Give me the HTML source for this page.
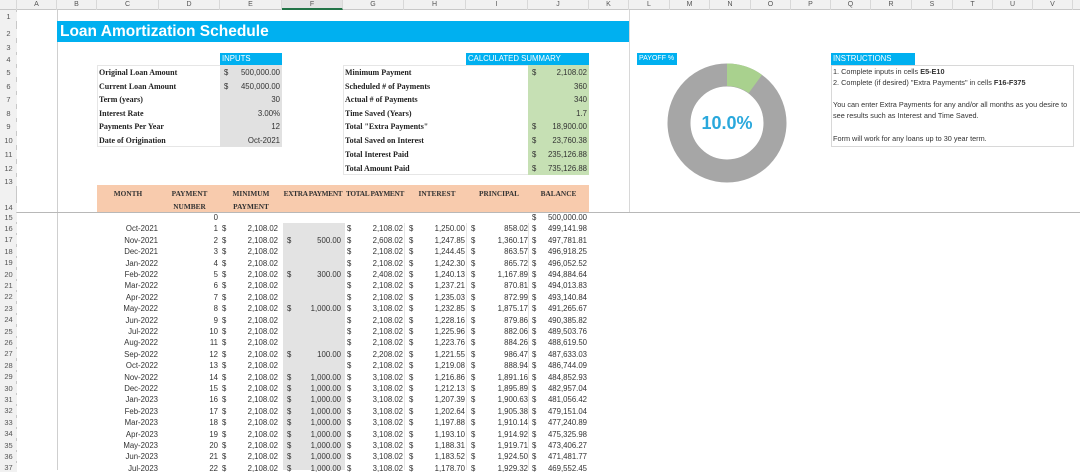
<!DOCTYPE html>
<html><head><meta charset="utf-8"><style>
*{margin:0;padding:0;box-sizing:border-box}
body{width:1080px;height:470px;overflow:hidden;background:#fff;position:relative;font-family:"Liberation Sans",sans-serif;color:#333}
.a{position:absolute;white-space:nowrap}
.ch{position:absolute;top:0;height:10px;font-size:7px;line-height:10px;color:#555;text-align:center;border-right:1px solid #d8d8d8}
.rh{position:absolute;left:0;width:17px;font-size:7.5px;color:#555;text-align:center;background:#f1f1f1}
.lb{position:absolute;font-family:"Liberation Serif",serif;font-weight:bold;font-size:8px;color:#222;white-space:nowrap}
.nv{position:absolute;font-size:7.8px;white-space:nowrap;text-align:right}
.r{position:absolute;left:0;width:600px;height:11px;font-size:7.8px;line-height:11px}
.r span{position:absolute;white-space:nowrap}
.m{left:97px;width:61px;text-align:right}
.n{left:160px;width:58px;text-align:right}
.d1{left:222px}.v1{left:230px;width:48px;text-align:right}
.d2{left:287px}.v2{left:295px;width:46px;text-align:right}
.d3{left:347px}.v3{left:355px;width:48px;text-align:right}
.d4{left:409px}.v4{left:415px;width:50px;text-align:right}
.d5{left:471px}.v5{left:478px;width:50px;text-align:right}
.d6{left:532px}.v6{left:540px;width:47px;text-align:right}
.hd{position:absolute;font-family:"Liberation Serif",serif;font-weight:bold;font-size:7.3px;color:#333;text-align:center;white-space:nowrap}
.blue{position:absolute;background:#00b0f0;color:#fff;font-size:7.8px;line-height:12px;padding-left:2px}
.ins{position:absolute;left:833px;font-size:7.3px;color:#333;white-space:nowrap}
</style></head><body>
<div class="a" style="left:0;top:0;width:1080px;height:10px;background:#f1f1f1;border-bottom:1px solid #c8c8c8"></div>
<div class="ch" style="left:0;width:17px"></div>
<div class="ch" style="left:17px;width:40px">A</div>
<div class="ch" style="left:57px;width:40px">B</div>
<div class="ch" style="left:97px;width:62px">C</div>
<div class="ch" style="left:159px;width:61px">D</div>
<div class="ch" style="left:220px;width:62px">E</div>
<div class="ch" style="left:282px;width:61px;background:#e3e3e3;border-bottom:2px solid #217346">F</div>
<div class="ch" style="left:343px;width:61px">G</div>
<div class="ch" style="left:404px;width:62px">H</div>
<div class="ch" style="left:466px;width:62px">I</div>
<div class="ch" style="left:528px;width:61px">J</div>
<div class="ch" style="left:589px;width:40px">K</div>
<div class="ch" style="left:629px;width:41px">L</div>
<div class="ch" style="left:670px;width:40px">M</div>
<div class="ch" style="left:710px;width:41px">N</div>
<div class="ch" style="left:751px;width:40px">O</div>
<div class="ch" style="left:791px;width:40px">P</div>
<div class="ch" style="left:831px;width:40px">Q</div>
<div class="ch" style="left:871px;width:41px">R</div>
<div class="ch" style="left:912px;width:41px">S</div>
<div class="ch" style="left:953px;width:40px">T</div>
<div class="ch" style="left:993px;width:40px">U</div>
<div class="ch" style="left:1033px;width:40px">V</div>
<div class="a" style="left:0;top:10px;width:17px;height:460px;background:#f1f1f1;border-right:1px solid #c8c8c8"></div>
<div class="rh" style="top:12px">1</div>
<div class="rh" style="top:29px">2</div>
<div class="rh" style="top:43px">3</div>
<div class="rh" style="top:55px">4</div>
<div class="rh" style="top:68px">5</div>
<div class="rh" style="top:82px">6</div>
<div class="rh" style="top:95px">7</div>
<div class="rh" style="top:109px">8</div>
<div class="rh" style="top:122px">9</div>
<div class="rh" style="top:136px">10</div>
<div class="rh" style="top:150px">11</div>
<div class="rh" style="top:164px">12</div>
<div class="rh" style="top:177px">13</div>
<div class="rh" style="top:203px">14</div>
<div class="rh" style="top:213px">15</div>
<div class="rh" style="top:224px">16</div>
<div class="rh" style="top:235px">17</div>
<div class="rh" style="top:247px">18</div>
<div class="rh" style="top:258px">19</div>
<div class="rh" style="top:270px">20</div>
<div class="rh" style="top:281px">21</div>
<div class="rh" style="top:292px">22</div>
<div class="rh" style="top:304px">23</div>
<div class="rh" style="top:315px">24</div>
<div class="rh" style="top:327px">25</div>
<div class="rh" style="top:338px">26</div>
<div class="rh" style="top:349px">27</div>
<div class="rh" style="top:361px">28</div>
<div class="rh" style="top:372px">29</div>
<div class="rh" style="top:384px">30</div>
<div class="rh" style="top:395px">31</div>
<div class="rh" style="top:406px">32</div>
<div class="rh" style="top:418px">33</div>
<div class="rh" style="top:429px">34</div>
<div class="rh" style="top:441px">35</div>
<div class="rh" style="top:452px">36</div>
<div class="rh" style="top:463px">37</div>

<div class="a" style="left:57px;top:10px;width:1px;height:460px;background:#cfcfcf"></div>
<div class="a" style="left:629px;top:10px;width:1px;height:203px;background:#d8d8d8"></div>
<div class="a" style="left:17px;top:212px;width:1063px;height:1px;background:#b8b8b8"></div>

<div class="a" style="left:57px;top:21px;width:572px;height:21px;background:#00b0f0;color:#fff;font-weight:bold;font-size:15.5px;line-height:21px;padding-left:3px">Loan Amortization Schedule</div>

<div class="blue" style="left:220px;top:53px;width:62px">INPUTS</div>
<div class="a" style="left:97px;top:65px;width:185px;height:82px;border:1px solid #e6e6e6"></div>
<div class="a" style="left:220px;top:65px;width:62px;height:82px;background:#e1e1e1"></div>
<div class="lb" style="left:99px;top:68px">Original Loan Amount</div>
<div class="lb" style="left:99px;top:82px">Current Loan Amount</div>
<div class="lb" style="left:99px;top:95px">Term (years)</div>
<div class="lb" style="left:99px;top:109px">Interest Rate</div>
<div class="lb" style="left:99px;top:122px">Payments Per Year</div>
<div class="lb" style="left:99px;top:136px">Date of Origination</div>
<div class="nv" style="left:224px;top:68px">$</div>
<div class="nv" style="left:224px;top:82px">$</div>
<div class="nv" style="left:220px;width:60px;top:68px">500,000.00</div>
<div class="nv" style="left:220px;width:60px;top:82px">450,000.00</div>
<div class="nv" style="left:220px;width:60px;top:95px">30</div>
<div class="nv" style="left:220px;width:60px;top:109px">3.00%</div>
<div class="nv" style="left:220px;width:60px;top:122px">12</div>
<div class="nv" style="left:220px;width:60px;top:136px">Oct-2021</div>

<div class="blue" style="left:466px;top:53px;width:123px">CALCULATED SUMMARY</div>
<div class="a" style="left:343px;top:65px;width:246px;height:110px;border:1px solid #e6e6e6"></div>
<div class="a" style="left:528px;top:65px;width:61px;height:110px;background:#c6e0b4"></div>
<div class="lb" style="left:345px;top:68px">Minimum Payment</div>
<div class="lb" style="left:345px;top:82px">Scheduled # of Payments</div>
<div class="lb" style="left:345px;top:95px">Actual # of Payments</div>
<div class="lb" style="left:345px;top:109px">Time Saved (Years)</div>
<div class="lb" style="left:345px;top:122px">Total "Extra Payments"</div>
<div class="lb" style="left:345px;top:136px">Total Saved on Interest</div>
<div class="lb" style="left:345px;top:150px">Total Interest Paid</div>
<div class="lb" style="left:345px;top:164px">Total Amount Paid</div>
<div class="nv" style="left:532px;top:68px">$</div>
<div class="nv" style="left:532px;top:122px">$</div>
<div class="nv" style="left:532px;top:136px">$</div>
<div class="nv" style="left:532px;top:150px">$</div>
<div class="nv" style="left:532px;top:164px">$</div>
<div class="nv" style="left:528px;width:59px;top:68px">2,108.02</div>
<div class="nv" style="left:528px;width:59px;top:82px">360</div>
<div class="nv" style="left:528px;width:59px;top:95px">340</div>
<div class="nv" style="left:528px;width:59px;top:109px">1.7</div>
<div class="nv" style="left:528px;width:59px;top:122px">18,900.00</div>
<div class="nv" style="left:528px;width:59px;top:136px">23,760.38</div>
<div class="nv" style="left:528px;width:59px;top:150px">235,126.88</div>
<div class="nv" style="left:528px;width:59px;top:164px">735,126.88</div>

<div class="blue" style="left:637px;top:53px;width:40px;font-size:7px">PAYOFF %</div>
<svg class="a" style="left:660px;top:56px" width="134" height="134" viewBox="0 0 134 134">
<circle cx="67" cy="67" r="48" fill="none" stroke="#a6a6a6" stroke-width="23"/>
<path d="M67 7.5 A59.5 59.5 0 0 1 101.97 18.86 L88.75 37.06 A37 37 0 0 0 67 30 Z" fill="#a9d18e"/>
<text x="67" y="73" text-anchor="middle" font-family="Liberation Sans,sans-serif" font-weight="bold" font-size="18" fill="#2aa8dc">10.0%</text>
</svg>

<div class="blue" style="left:831px;top:53px;width:84px">INSTRUCTIONS</div>
<div class="a" style="left:831px;top:65px;width:243px;height:82px;border:1px solid #d8d8d8"></div>
<div class="ins" style="top:67px">1. Complete inputs in cells <b>E5-E10</b></div>
<div class="ins" style="top:78px">2. Complete (if desired) "Extra Payments" in cells <b>F16-F375</b></div>
<div class="ins" style="top:100px">You can enter Extra Payments for any and/or all months as you desire to</div>
<div class="ins" style="top:111px">see results such as Interest and Time Saved.</div>
<div class="ins" style="top:134px">Form will work for any loans up to 30 year term.</div>

<div class="a" style="left:97px;top:185px;width:492px;height:27px;background:#f8cbad"></div>
<div class="hd" style="left:97px;width:62px;top:189px">MONTH</div>
<div class="hd" style="left:159px;width:61px;top:189px">PAYMENT<br><span style="line-height:18px">NUMBER</span></div>
<div class="hd" style="left:220px;width:62px;top:189px">MINIMUM<br><span style="line-height:18px">PAYMENT</span></div>
<div class="hd" style="left:282px;width:62px;top:189px;letter-spacing:-0.3px">EXTRA PAYMENT</div>
<div class="hd" style="left:344px;width:62px;top:189px;letter-spacing:-0.3px">TOTAL PAYMENT</div>
<div class="hd" style="left:406px;width:62px;top:189px">INTEREST</div>
<div class="hd" style="left:468px;width:62px;top:189px">PRINCIPAL</div>
<div class="hd" style="left:528px;width:61px;top:189px">BALANCE</div>

<div class="a" style="left:283px;top:223px;width:62px;height:247px;background:#e3e3e3"></div>
<div class="a" style="left:404px;top:223px;width:1px;height:247px;background:#e4e4e4"></div>
<div class="a" style="left:466px;top:223px;width:1px;height:247px;background:#e4e4e4"></div>
<div class="a" style="left:528px;top:223px;width:1px;height:247px;background:#e4e4e4"></div>

<div class="r" style="top:212px"><span class="n">0</span><span class="d6">$</span><span class="v6">500,000.00</span></div>
<div class="r" style="top:223px"><span class="m">Oct-2021</span><span class="n">1</span><span class="d1">$</span><span class="v1">2,108.02</span><span class="d3">$</span><span class="v3">2,108.02</span><span class="d4">$</span><span class="v4">1,250.00</span><span class="d5">$</span><span class="v5">858.02</span><span class="d6">$</span><span class="v6">499,141.98</span></div>
<div class="r" style="top:235px"><span class="m">Nov-2021</span><span class="n">2</span><span class="d1">$</span><span class="v1">2,108.02</span><span class="d2">$</span><span class="v2">500.00</span><span class="d3">$</span><span class="v3">2,608.02</span><span class="d4">$</span><span class="v4">1,247.85</span><span class="d5">$</span><span class="v5">1,360.17</span><span class="d6">$</span><span class="v6">497,781.81</span></div>
<div class="r" style="top:246px"><span class="m">Dec-2021</span><span class="n">3</span><span class="d1">$</span><span class="v1">2,108.02</span><span class="d3">$</span><span class="v3">2,108.02</span><span class="d4">$</span><span class="v4">1,244.45</span><span class="d5">$</span><span class="v5">863.57</span><span class="d6">$</span><span class="v6">496,918.25</span></div>
<div class="r" style="top:258px"><span class="m">Jan-2022</span><span class="n">4</span><span class="d1">$</span><span class="v1">2,108.02</span><span class="d3">$</span><span class="v3">2,108.02</span><span class="d4">$</span><span class="v4">1,242.30</span><span class="d5">$</span><span class="v5">865.72</span><span class="d6">$</span><span class="v6">496,052.52</span></div>
<div class="r" style="top:269px"><span class="m">Feb-2022</span><span class="n">5</span><span class="d1">$</span><span class="v1">2,108.02</span><span class="d2">$</span><span class="v2">300.00</span><span class="d3">$</span><span class="v3">2,408.02</span><span class="d4">$</span><span class="v4">1,240.13</span><span class="d5">$</span><span class="v5">1,167.89</span><span class="d6">$</span><span class="v6">494,884.64</span></div>
<div class="r" style="top:280px"><span class="m">Mar-2022</span><span class="n">6</span><span class="d1">$</span><span class="v1">2,108.02</span><span class="d3">$</span><span class="v3">2,108.02</span><span class="d4">$</span><span class="v4">1,237.21</span><span class="d5">$</span><span class="v5">870.81</span><span class="d6">$</span><span class="v6">494,013.83</span></div>
<div class="r" style="top:292px"><span class="m">Apr-2022</span><span class="n">7</span><span class="d1">$</span><span class="v1">2,108.02</span><span class="d3">$</span><span class="v3">2,108.02</span><span class="d4">$</span><span class="v4">1,235.03</span><span class="d5">$</span><span class="v5">872.99</span><span class="d6">$</span><span class="v6">493,140.84</span></div>
<div class="r" style="top:303px"><span class="m">May-2022</span><span class="n">8</span><span class="d1">$</span><span class="v1">2,108.02</span><span class="d2">$</span><span class="v2">1,000.00</span><span class="d3">$</span><span class="v3">3,108.02</span><span class="d4">$</span><span class="v4">1,232.85</span><span class="d5">$</span><span class="v5">1,875.17</span><span class="d6">$</span><span class="v6">491,265.67</span></div>
<div class="r" style="top:315px"><span class="m">Jun-2022</span><span class="n">9</span><span class="d1">$</span><span class="v1">2,108.02</span><span class="d3">$</span><span class="v3">2,108.02</span><span class="d4">$</span><span class="v4">1,228.16</span><span class="d5">$</span><span class="v5">879.86</span><span class="d6">$</span><span class="v6">490,385.82</span></div>
<div class="r" style="top:326px"><span class="m">Jul-2022</span><span class="n">10</span><span class="d1">$</span><span class="v1">2,108.02</span><span class="d3">$</span><span class="v3">2,108.02</span><span class="d4">$</span><span class="v4">1,225.96</span><span class="d5">$</span><span class="v5">882.06</span><span class="d6">$</span><span class="v6">489,503.76</span></div>
<div class="r" style="top:337px"><span class="m">Aug-2022</span><span class="n">11</span><span class="d1">$</span><span class="v1">2,108.02</span><span class="d3">$</span><span class="v3">2,108.02</span><span class="d4">$</span><span class="v4">1,223.76</span><span class="d5">$</span><span class="v5">884.26</span><span class="d6">$</span><span class="v6">488,619.50</span></div>
<div class="r" style="top:349px"><span class="m">Sep-2022</span><span class="n">12</span><span class="d1">$</span><span class="v1">2,108.02</span><span class="d2">$</span><span class="v2">100.00</span><span class="d3">$</span><span class="v3">2,208.02</span><span class="d4">$</span><span class="v4">1,221.55</span><span class="d5">$</span><span class="v5">986.47</span><span class="d6">$</span><span class="v6">487,633.03</span></div>
<div class="r" style="top:360px"><span class="m">Oct-2022</span><span class="n">13</span><span class="d1">$</span><span class="v1">2,108.02</span><span class="d3">$</span><span class="v3">2,108.02</span><span class="d4">$</span><span class="v4">1,219.08</span><span class="d5">$</span><span class="v5">888.94</span><span class="d6">$</span><span class="v6">486,744.09</span></div>
<div class="r" style="top:372px"><span class="m">Nov-2022</span><span class="n">14</span><span class="d1">$</span><span class="v1">2,108.02</span><span class="d2">$</span><span class="v2">1,000.00</span><span class="d3">$</span><span class="v3">3,108.02</span><span class="d4">$</span><span class="v4">1,216.86</span><span class="d5">$</span><span class="v5">1,891.16</span><span class="d6">$</span><span class="v6">484,852.93</span></div>
<div class="r" style="top:383px"><span class="m">Dec-2022</span><span class="n">15</span><span class="d1">$</span><span class="v1">2,108.02</span><span class="d2">$</span><span class="v2">1,000.00</span><span class="d3">$</span><span class="v3">3,108.02</span><span class="d4">$</span><span class="v4">1,212.13</span><span class="d5">$</span><span class="v5">1,895.89</span><span class="d6">$</span><span class="v6">482,957.04</span></div>
<div class="r" style="top:394px"><span class="m">Jan-2023</span><span class="n">16</span><span class="d1">$</span><span class="v1">2,108.02</span><span class="d2">$</span><span class="v2">1,000.00</span><span class="d3">$</span><span class="v3">3,108.02</span><span class="d4">$</span><span class="v4">1,207.39</span><span class="d5">$</span><span class="v5">1,900.63</span><span class="d6">$</span><span class="v6">481,056.42</span></div>
<div class="r" style="top:406px"><span class="m">Feb-2023</span><span class="n">17</span><span class="d1">$</span><span class="v1">2,108.02</span><span class="d2">$</span><span class="v2">1,000.00</span><span class="d3">$</span><span class="v3">3,108.02</span><span class="d4">$</span><span class="v4">1,202.64</span><span class="d5">$</span><span class="v5">1,905.38</span><span class="d6">$</span><span class="v6">479,151.04</span></div>
<div class="r" style="top:417px"><span class="m">Mar-2023</span><span class="n">18</span><span class="d1">$</span><span class="v1">2,108.02</span><span class="d2">$</span><span class="v2">1,000.00</span><span class="d3">$</span><span class="v3">3,108.02</span><span class="d4">$</span><span class="v4">1,197.88</span><span class="d5">$</span><span class="v5">1,910.14</span><span class="d6">$</span><span class="v6">477,240.89</span></div>
<div class="r" style="top:429px"><span class="m">Apr-2023</span><span class="n">19</span><span class="d1">$</span><span class="v1">2,108.02</span><span class="d2">$</span><span class="v2">1,000.00</span><span class="d3">$</span><span class="v3">3,108.02</span><span class="d4">$</span><span class="v4">1,193.10</span><span class="d5">$</span><span class="v5">1,914.92</span><span class="d6">$</span><span class="v6">475,325.98</span></div>
<div class="r" style="top:440px"><span class="m">May-2023</span><span class="n">20</span><span class="d1">$</span><span class="v1">2,108.02</span><span class="d2">$</span><span class="v2">1,000.00</span><span class="d3">$</span><span class="v3">3,108.02</span><span class="d4">$</span><span class="v4">1,188.31</span><span class="d5">$</span><span class="v5">1,919.71</span><span class="d6">$</span><span class="v6">473,406.27</span></div>
<div class="r" style="top:451px"><span class="m">Jun-2023</span><span class="n">21</span><span class="d1">$</span><span class="v1">2,108.02</span><span class="d2">$</span><span class="v2">1,000.00</span><span class="d3">$</span><span class="v3">3,108.02</span><span class="d4">$</span><span class="v4">1,183.52</span><span class="d5">$</span><span class="v5">1,924.50</span><span class="d6">$</span><span class="v6">471,481.77</span></div>
<div class="r" style="top:463px"><span class="m">Jul-2023</span><span class="n">22</span><span class="d1">$</span><span class="v1">2,108.02</span><span class="d2">$</span><span class="v2">1,000.00</span><span class="d3">$</span><span class="v3">3,108.02</span><span class="d4">$</span><span class="v4">1,178.70</span><span class="d5">$</span><span class="v5">1,929.32</span><span class="d6">$</span><span class="v6">469,552.45</span></div>
</body></html>
